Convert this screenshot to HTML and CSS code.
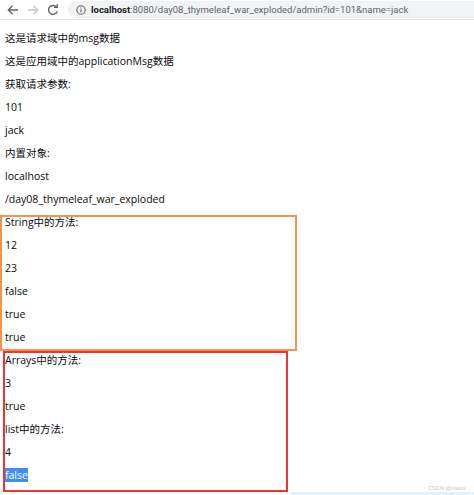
FILE: index.html
```html
<!DOCTYPE html>
<html lang="zh">
<head>
<meta charset="utf-8">
<title>admin</title>
<link rel="stylesheet" href="styles.css">
</head>
<body>
<div class="toolbar">
  <div class="nav">
    <svg class="ico" width="14" height="14" viewBox="0 0 14 14"><path d="M12 7H2.5M6.5 2.8L2.3 7l4.2 4.2" fill="none" stroke="#5f6368" stroke-width="1.3"/></svg>
    <svg class="ico" width="14" height="14" viewBox="0 0 14 14"><path d="M2 7h9.5M7.5 2.8L11.7 7l-4.2 4.2" fill="none" stroke="#c4c7ca" stroke-width="1.3"/></svg>
    <svg class="ico" width="14" height="14" viewBox="0 0 14 14"><path d="M11.2 8.2A4.4 4.4 0 1 1 10.3 4" fill="none" stroke="#5f6368" stroke-width="1.4"/><path d="M8 4.3h3.2V1.1" fill="none" stroke="#5f6368" stroke-width="1.4"/></svg>
  </div>
  <div class="omnibox">
    <svg class="info" width="10" height="10" viewBox="0 0 10 10"><circle cx="5" cy="5" r="4.2" fill="none" stroke="#5f6368" stroke-width="1.1"/><path d="M5 4.3v3" stroke="#5f6368" stroke-width="1.1"/><circle cx="5" cy="2.9" r="0.6" fill="#5f6368"/></svg>
    <span class="host">localhost</span><span class="path">:8080/day08_thymeleaf_war_exploded/admin?id=101&amp;name=jack</span>
  </div>
</div>
<main class="content">
  <p class="line">这是请求域中的msg数据</p>
  <p class="line">这是应用域中的applicationMsg数据</p>
  <p class="line">获取请求参数:</p>
  <p class="line">101</p>
  <p class="line">jack</p>
  <p class="line">内置对象:</p>
  <p class="line">localhost</p>
  <p class="line">/day08_thymeleaf_war_exploded</p>
  <p class="line">String中的方法:</p>
  <p class="line">12</p>
  <p class="line">23</p>
  <p class="line">false</p>
  <p class="line">true</p>
  <p class="line">true</p>
  <p class="line">Arrays中的方法:</p>
  <p class="line">3</p>
  <p class="line">true</p>
  <p class="line">list中的方法:</p>
  <p class="line">4</p>
  <p class="line"><span class="sel">false</span></p>
</main>
<div class="mark mark-orange"></div>
<div class="mark mark-red"></div>
<div class="watermark">CSDN @xiaox</div>
<div class="bottombar"></div>
</body>
</html>
```
FILE: styles.css
```css
html, body {
  margin: 0;
  padding: 0;
  background: #ffffff;
}
body {
  width: 474px;
  height: 495px;
  overflow: hidden;
  position: relative;
  font-family: "Open Sans", "Noto Sans CJK SC", sans-serif;
  color: #0a0a0a;
}
.toolbar {
  height: 19px;
  display: flex;
  align-items: center;
  border-bottom: 1px solid #e3e3e3;
  box-sizing: content-box;
}
.nav {
  display: flex;
  align-items: center;
  gap: 6px;
  padding-left: 6px;
  width: 62px;
  flex: none;
}
.ico { display: block; }
.omnibox {
  flex: 1;
  height: 17px;
  background: #f1f3f4;
  border-radius: 9px 0 0 9px;
  display: flex;
  align-items: center;
  padding-left: 8px;
  font-family: Roboto, sans-serif;
  font-size: 9.5px;
  white-space: nowrap;
}
.info { margin-right: 5px; flex: none; }
.host { color: #202124; font-weight: 700; }
.path { color: #5f6368; }
.content {
  padding: 7px 0 0 5px;
}
.line {
  margin: 0;
  height: 23px;
  line-height: 23px;
  font-size: 10.5px;
  white-space: nowrap;
}
.sel {
  background: #3c8fea;
  color: #ffffff;
}
.mark {
  position: absolute;
  box-sizing: border-box;
  pointer-events: none;
}
.mark-orange {
  left: 0;
  top: 215px;
  width: 297px;
  height: 136px;
  border: 2px solid #f5934b;
}
.mark-red {
  left: 3px;
  top: 351px;
  width: 285px;
  height: 141px;
  border: 2px solid #ec3434;
}
.watermark {
  position: absolute;
  right: 8px;
  top: 484px;
  font-family: "Noto Sans", sans-serif;
  font-size: 6px;
  color: #c8c8c8;
}
.bottombar {
  position: absolute;
  left: 290px;
  right: 0;
  top: 492px;
  height: 3px;
  background: #e6f0f8;
}
```
